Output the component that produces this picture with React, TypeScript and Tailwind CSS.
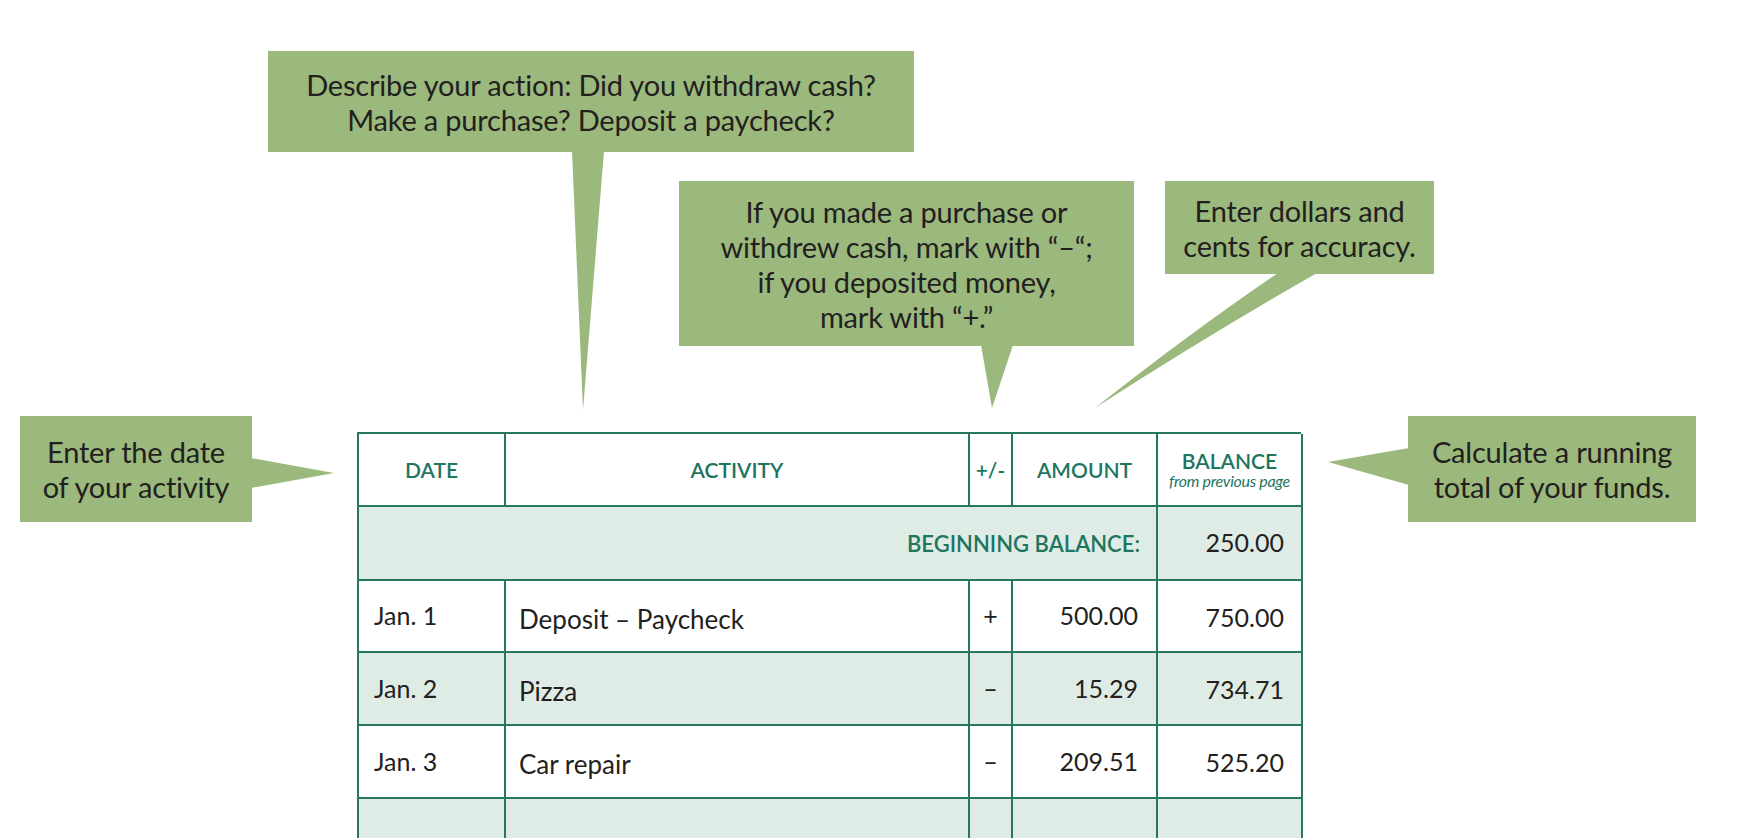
import React from 'react';

const green = 'bg-[#9bb97c]';

type Row = { date: string; activity: string; sign: string; amount: string; balance: string; shaded: boolean };

const rows: Row[] = [
  { date: 'Jan. 1', activity: 'Deposit – Paycheck', sign: '+', amount: '500.00', balance: '750.00', shaded: false },
  { date: 'Jan. 2', activity: 'Pizza', sign: '–', amount: '15.29', balance: '734.71', shaded: true },
  { date: 'Jan. 3', activity: 'Car repair', sign: '–', amount: '209.51', balance: '525.20', shaded: false },
  { date: '', activity: '', sign: '', amount: '', balance: '', shaded: true },
];

function Callout({ className, children, tail }: { className: string; children: React.ReactNode; tail: React.ReactNode }) {
  return (
    <div className={`relative shrink-0 flex items-center justify-center text-center ${green} ${className}`}>
      <div className="text-[29px] leading-[35px] tracking-[-0.2px] text-[#231f20]">{children}</div>
      {tail}
    </div>
  );
}

export default function App() {
  const cell = 'border-r-2 border-b-2 border-[#25785f] flex items-center';
  const head = `${cell} justify-center text-[21px] font-semibold text-[#1e7560] uppercase`;

  return (
    <div
      className="relative w-[1752px] h-[838px] overflow-hidden bg-white"
      style={{ fontFamily: 'Lato, "Open Sans", sans-serif' }}
    >
      {/* top callout */}
      <div className="pt-[51px] pl-[268px]">
        <Callout
          className="w-[646px] h-[101px]"
          tail={
            <svg className="absolute left-[304px] top-[100px]" width="33" height="260" viewBox="0 0 33 260">
              <polygon points="0,0 32,0 11,259" fill="#9bb97c" />
            </svg>
          }
        >
          Describe your action: Did you withdraw cash?
          <br />
          Make a purchase? Deposit a paycheck?
        </Callout>
      </div>

      {/* second row of callouts */}
      <div className="mt-[29px] flex items-start">
        <Callout
          className="ml-[679px] w-[455px] h-[165px]"
          tail={
            <svg className="absolute left-[302px] top-[164px]" width="33" height="64" viewBox="0 0 33 64">
              <polygon points="0,0 32,0 11,63" fill="#9bb97c" />
            </svg>
          }
        >
          If you made a purchase or
          <br />
          withdrew cash, mark with “–“;
          <br />
          if you deposited money,
          <br />
          mark with “+.”
        </Callout>
        <Callout
          className="ml-[31px] w-[269px] h-[93px]"
          tail={
            <svg className="absolute left-[-70px] top-[92px]" width="223" height="136" viewBox="0 0 223 136">
              <path d="M183,0 L222,0 Q110,64 0,135 Q95,60 183,0 Z" fill="#9bb97c" />
            </svg>
          }
        >
          Enter dollars and
          <br />
          cents for accuracy.
        </Callout>
      </div>

      {/* table row */}
      <div className="mt-[70px] flex items-start">
        <Callout
          className="ml-[20px] w-[232px] h-[106px]"
          tail={
            <svg className="absolute left-[231px] top-[42px]" width="84" height="31" viewBox="0 0 84 31">
              <polygon points="0,0 83,15 0,30" fill="#9bb97c" />
            </svg>
          }
        >
          Enter the date
          <br />
          of your activity
        </Callout>

        <div className="ml-[105px] mt-[16px] w-[944px] shrink-0 border-l-2 border-t-2 border-[#25785f] grid grid-cols-[147px_464px_43px_145px_145px] text-[25px] text-[#231f20]">
          <div className={`${head} h-[73px]`}>Date</div>
          <div className={`${head} h-[73px]`}>Activity</div>
          <div className={`${head} h-[73px] font-normal`}>+/-</div>
          <div className={`${head} h-[73px]`}>Amount</div>
          <div className={`${cell} h-[73px] flex-col justify-center text-[#1e7560]`}>
            <span className="text-[21px] font-semibold leading-[22px]">BALANCE</span>
            <span className="text-[16px] italic leading-[17px] tracking-[-0.3px]">from previous page</span>
          </div>

          <div className={`${cell} col-span-4 h-[74px] justify-end pr-[16px] bg-[#dfece5] text-[22px] font-semibold text-[#1e7560]`}>
            BEGINNING BALANCE:
          </div>
          <div className={`${cell} h-[74px] justify-end pr-[17px] bg-[#dfece5]`}>250.00</div>

          {rows.map((r, i) => {
            const bg = r.shaded ? 'bg-[#dfece5]' : 'bg-white';
            const h = i === 0 ? 'h-[72px]' : 'h-[73px]';
            return (
              <React.Fragment key={i}>
                <div className={`${cell} ${bg} ${h} pl-[15px]`}>{r.date}</div>
                <div className={`${cell} ${bg} ${h} pl-[13px] pt-[6px] text-[26px]`}>{r.activity}</div>
                <div className={`${cell} ${bg} ${h} justify-center`}>{r.sign}</div>
                <div className={`${cell} ${bg} ${h} justify-end pr-[18px]`}>{r.amount}</div>
                <div className={`${cell} ${bg} ${h} justify-end pr-[17px] pt-[3px]`}>{r.balance}</div>
              </React.Fragment>
            );
          })}
        </div>

        <Callout
          className="ml-[107px] w-[288px] h-[106px]"
          tail={
            <svg className="absolute left-[-80px] top-[32px]" width="81" height="38" viewBox="0 0 81 38">
              <polygon points="81,0 0,14 81,37" fill="#9bb97c" />
            </svg>
          }
        >
          Calculate a running
          <br />
          total of your funds.
        </Callout>
      </div>
    </div>
  );
}
